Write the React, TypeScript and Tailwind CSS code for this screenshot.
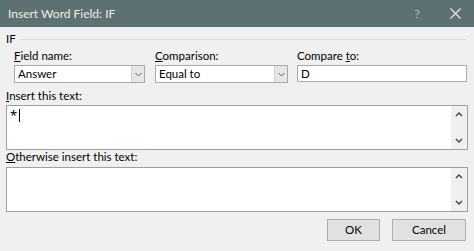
import { ReactNode } from "react";

function Chevron({ up = false }: { up?: boolean }) {
  return (
    <svg width="8" height="5" viewBox="0 0 8 5" className={up ? "rotate-180" : ""}>
      <path d="M1 1l3 3 3-3" fill="none" stroke="#404040" strokeWidth="1.4" />
    </svg>
  );
}

function Label({ k, rest, pre = "" }: { k: string; rest: string; pre?: string }) {
  return (
    <div className="text-[11.5px] leading-[14px] text-black">
      {pre}
      <span className="underline underline-offset-1">{k}</span>
      {rest}
    </div>
  );
}

function Select({ value, width }: { value: string; width: string }) {
  return (
    <div className={`${width} h-[18px] flex border border-[#a9a9a9] bg-white`}>
      <div className="flex-1 pl-[3px] text-[11.5px] leading-[16px]">{value}</div>
      <div className="w-[13px] bg-[#e6e6e6] border-l border-[#cfcfcf] flex items-center justify-center">
        <svg width="7" height="5" viewBox="0 0 7 5">
          <path d="M0.5 1l3 3 3-3" fill="none" stroke="#606060" strokeWidth="1" />
        </svg>
      </div>
    </div>
  );
}

function TextBox({ children }: { children?: ReactNode }) {
  return (
    <div className="h-[45px] flex border border-[#a0a0a0] bg-white">
      <div className="flex-1 pl-[3px] pt-[2px]">{children}</div>
      <div className="w-[16px] bg-[#f0f0f0] flex flex-col items-center justify-between py-[6px]">
        <Chevron up />
        <Chevron />
      </div>
    </div>
  );
}

export default function App() {
  return (
    <div className="w-[474px] h-[251px] bg-[#f0f0f0] font-['Lato',sans-serif] overflow-hidden">
      <div className="h-[27px] bg-[#5e7172] flex items-center text-[#e9eded]">
        <div className="flex-1 pl-[8px] text-[12px]">Insert Word Field: IF</div>
        <div className="w-[38px] text-center text-[12px] font-light">?</div>
        <div className="w-[38px] flex items-center justify-center">
          <svg width="11" height="11" viewBox="0 0 11 11">
            <path d="M0.5 0.5l10 10M10.5 0.5l-10 10" stroke="#e9eded" strokeWidth="1.1" />
          </svg>
        </div>
      </div>

      <div className="px-[6px]">
        <div className="flex items-center h-[14px] mt-[5px]">
          <span className="text-[11.5px] leading-[14px]">IF</span>
          <div className="flex-1 ml-[4px] mr-[2px] border-t border-[#dcdcdc]" />
        </div>

        <div className="flex pl-[8px] mt-[3px]">
          <div className="w-[131px]">
            <Label k="F" rest="ield name:" />
            <div className="mt-[2px]">
              <Select value="Answer" width="w-[131px]" />
            </div>
          </div>
          <div className="w-[133px] ml-[10px]">
            <Label k="C" rest="omparison:" />
            <div className="mt-[2px]">
              <Select value="Equal to" width="w-[133px]" />
            </div>
          </div>
          <div className="w-[170px] ml-[9px]">
            <Label pre="Compare " k="t" rest="o:" />
            <div className="mt-[2px] h-[17px] border border-[#a9a9a9] bg-white pl-[3px] text-[11.5px] leading-[15px]">
              D
            </div>
          </div>
        </div>

        <div className="mt-[6px]">
          <Label k="I" rest="nsert this text:" />
        </div>
        <div className="mt-[2px] w-[462px]">
          <TextBox>
            <div className="flex items-start leading-[14px]">
              <span className="text-[13px] font-['Noto_Sans',sans-serif]">*</span>
              <span className="ml-[2px] mt-[1px] w-[1px] h-[13px] bg-black" />
            </div>
          </TextBox>
        </div>

        <div>
          <Label k="O" rest="therwise insert this text:" />
        </div>
        <div className="mt-[3px] w-[462px]">
          <TextBox />
        </div>

        <div className="flex justify-end mt-[7px] pr-[2px]">
          <div className="w-[53px] h-[22px] bg-[#e1e1e1] border border-[#adadad] text-[11.5px] flex items-center justify-center">
            OK
          </div>
          <div className="w-[74px] h-[22px] ml-[12px] bg-[#e1e1e1] border border-[#adadad] text-[11.5px] flex items-center justify-center">
            Cancel
          </div>
        </div>
      </div>
    </div>
  );
}
